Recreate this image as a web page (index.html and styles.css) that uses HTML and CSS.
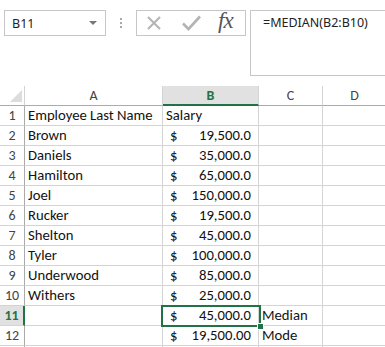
FILE: index.html
```html
<!DOCTYPE html>
<html>
<head>
<meta charset="utf-8">
<link rel="stylesheet" href="styles.css">
</head>
<body>
<div class="bar">
  <div class="namebox"><span class="name">B11</span><span class="caret"></span></div>
  <div class="dots"><i></i><i></i><i></i></div>
  <div class="btns">
    <svg class="ic x" width="16" height="16" viewBox="0 0 16 16"><path d="M2 2 L14 14 M14 2 L2 14" stroke="#b4b4b4" stroke-width="2" fill="none"/></svg>
    <svg class="ic ok" width="19" height="16" viewBox="0 0 19 16"><path d="M1 8.5 L6.5 14 L18 1.5" stroke="#b4b4b4" stroke-width="2.6" fill="none"/></svg>
    <span class="fx">fx</span>
  </div>
  <div class="formula">=MEDIAN(B2:B10)</div>
</div>
<div class="sheet">
  <div class="grid">
    <div class="c corner"><span class="tri"></span></div>
    <div class="c ch">A</div>
    <div class="c ch sel">B</div>
    <div class="c ch">C</div>
    <div class="c ch">D</div>

    <div class="c rh">1</div><div class="c t">Employee Last Name</div><div class="c t">Salary</div><div class="c"></div><div class="c"></div>
    <div class="c rh">2</div><div class="c t">Brown</div><div class="c m"><span>$</span><span>19,500.0</span></div><div class="c"></div><div class="c"></div>
    <div class="c rh">3</div><div class="c t">Daniels</div><div class="c m"><span>$</span><span>35,000.0</span></div><div class="c"></div><div class="c"></div>
    <div class="c rh">4</div><div class="c t">Hamilton</div><div class="c m"><span>$</span><span>65,000.0</span></div><div class="c"></div><div class="c"></div>
    <div class="c rh">5</div><div class="c t">Joel</div><div class="c m"><span>$</span><span>150,000.0</span></div><div class="c"></div><div class="c"></div>
    <div class="c rh">6</div><div class="c t">Rucker</div><div class="c m"><span>$</span><span>19,500.0</span></div><div class="c"></div><div class="c"></div>
    <div class="c rh">7</div><div class="c t">Shelton</div><div class="c m"><span>$</span><span>45,000.0</span></div><div class="c"></div><div class="c"></div>
    <div class="c rh">8</div><div class="c t">Tyler</div><div class="c m"><span>$</span><span>100,000.0</span></div><div class="c"></div><div class="c"></div>
    <div class="c rh">9</div><div class="c t">Underwood</div><div class="c m"><span>$</span><span>85,000.0</span></div><div class="c"></div><div class="c"></div>
    <div class="c rh">10</div><div class="c t">Withers</div><div class="c m"><span>$</span><span>25,000.0</span></div><div class="c"></div><div class="c"></div>
    <div class="c rh rsel">11</div><div class="c t"></div><div class="c m"><span>$</span><span>45,000.0</span></div><div class="c t">Median</div><div class="c"></div>
    <div class="c rh">12</div><div class="c t"></div><div class="c m"><span>$</span><span>19,500.00</span></div><div class="c t">Mode</div><div class="c"></div>
    <div class="c rh"></div><div class="c"></div><div class="c"></div><div class="c"></div><div class="c"></div>
  </div>
  <div class="selbox"><span class="handle"></span></div>
</div>
</body>
</html>
```

FILE: styles.css
```css
html, body {
  margin: 0;
  padding: 0;
  background: #fff;
  overflow: hidden;
  width: 385px;
  height: 347px;
}
.bar {
  height: 86px;
  display: flex;
  align-items: flex-start;
  padding-top: 10px;
  box-sizing: border-box;
  padding-left: 4px;
}
.namebox {
  width: 102px;
  height: 26px;
  box-sizing: border-box;
  border: 1px solid #c6c6c6;
  display: flex;
  align-items: center;
  justify-content: space-between;
  padding: 0 8px 0 7px;
  font-family: "Noto Sans", "Open Sans", sans-serif;
  font-size: 12.5px;
  color: #222;
}
.caret {
  width: 0;
  height: 0;
  border-left: 4px solid transparent;
  border-right: 4px solid transparent;
  border-top: 4px solid #777;
}
.dots {
  width: 30px;
  height: 26px;
  display: flex;
  flex-direction: column;
  align-items: center;
  justify-content: center;
  gap: 2px;
}
.dots i {
  display: block;
  width: 2px;
  height: 2px;
  background: #a8a8a8;
}
.btns {
  width: 110px;
  height: 26px;
  box-sizing: border-box;
  border: 1px solid #c6c6c6;
  display: flex;
  align-items: center;
  padding-left: 9px;
}
.ic.x { margin-right: 20px; }
.ic.ok { margin-right: 17px; }
.fx {
  font-family: "Liberation Serif", serif;
  font-style: italic;
  font-size: 23px;
  color: #555;
  letter-spacing: -1px;
  margin-top: -4px;
}
.formula {
  margin-left: 4px;
  flex: 1;
  height: 66px;
  box-sizing: border-box;
  border: 1px solid #c6c6c6;
  border-right: none;
  padding: 3px 0 0 12px;
  font-family: "Noto Sans", "Open Sans", sans-serif;
  font-size: 12.5px;
  color: #222;
}
.sheet {
  position: relative;
  height: 261px;
  overflow: hidden;
}
.grid {
  display: grid;
  grid-template-columns: 25px 138px 96px 64px 64px;
  grid-auto-rows: 20px;
  font-family: "Carlito", "Lato", sans-serif;
  font-size: 14.7px;
  color: #111;
}
.c {
  box-sizing: border-box;
  border-right: 1px solid #d4d4d4;
  border-bottom: 1px solid #d4d4d4;
  overflow: visible;
  white-space: nowrap;
  line-height: 19px;
}
.corner {
  position: relative;
  border-right: 1px solid #d4d4d4;
  border-bottom: 1px solid #ababab;
}
.tri {
  position: absolute;
  right: 2px;
  bottom: 3px;
  width: 0;
  height: 0;
  border-left: 12px solid transparent;
  border-bottom: 12px solid #dcdcdc;
}
.ch {
  text-align: center;
  color: #444;
  border-bottom: 1px solid #ababab;
  font-size: 14px;
}
.ch.sel {
  background: #e1e1e1;
  color: #217346;
  font-weight: bold;
  border-bottom: 2px solid #217346;
}
.rh {
  text-align: center;
  color: #444;
  font-size: 14px;
  border-right: 1px solid #ababab;
}
.rh.rsel {
  background: #e1e1e1;
  color: #217346;
  font-weight: bold;
  border-right: 2px solid #217346;
}
.t {
  padding-left: 3px;
}
.m {
  display: flex;
  justify-content: space-between;
  padding: 0 7px 0 7px;
}
.selbox {
  position: absolute;
  left: 161px;
  top: 219px;
  width: 100px;
  height: 22px;
  box-sizing: border-box;
  border: 2px solid #217346;
}
.handle {
  position: absolute;
  right: -5px;
  bottom: -5px;
  width: 5px;
  height: 5px;
  background: #217346;
  border: 1px solid #fff;
}
```
